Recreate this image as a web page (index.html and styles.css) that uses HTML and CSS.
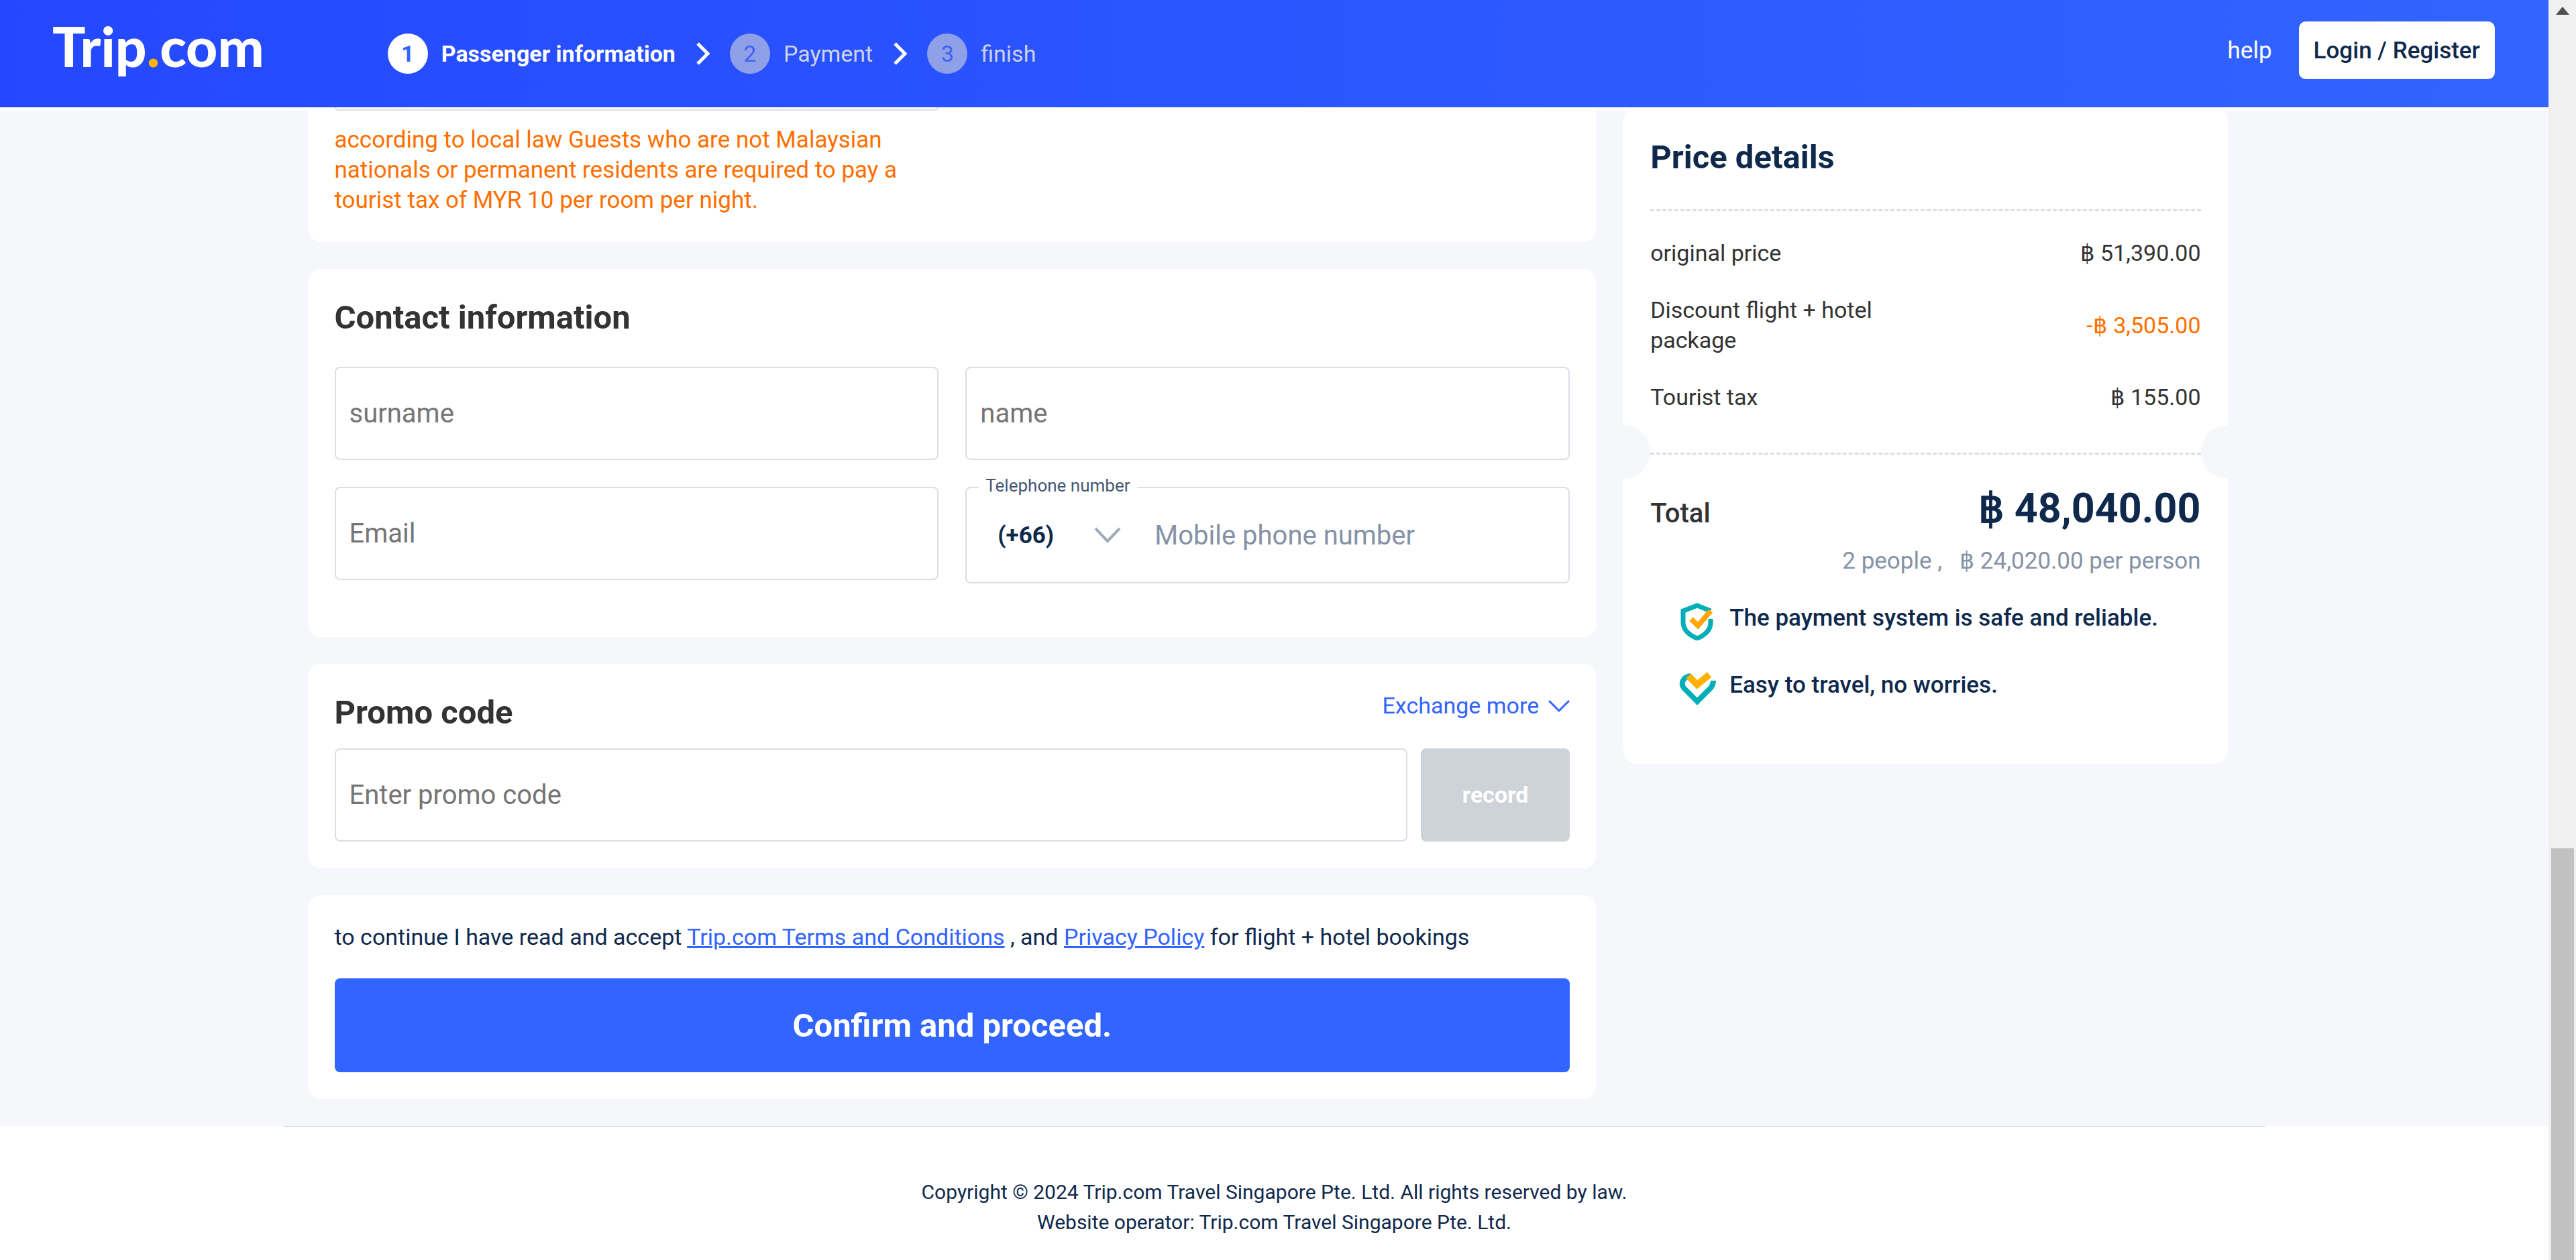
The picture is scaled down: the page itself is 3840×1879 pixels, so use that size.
FILE: index.html
```html
<!DOCTYPE html>
<html lang="en">
<head>
	<meta charset="UTF-8">
	<title>Trip.com - Passenger information</title>
	<link rel="stylesheet" href="styles.css">
</head>
<body>
	<div id="page">
		<header id="header">
			<a href="#" class="logo">Trip<span>.</span>com</a>
			<ol class="steps">
				<li class="on"><i>1</i>Passenger information</li>
				<li class="arrow"><svg width="21" height="36" viewBox="0 0 21 36"><path d="M3 3l15 15L3 33"/></svg></li>
				<li><i>2</i>Payment</li>
				<li class="arrow"><svg width="21" height="36" viewBox="0 0 21 36"><path d="M3 3l15 15L3 33"/></svg></li>
				<li><i>3</i>finish</li>
			</ol>
			<nav class="user">
				<a href="#" class="help">help</a>
				<button type="button" class="login">Login / Register</button>
			</nav>
		</header>

		<main id="main">
			<div class="wrap">
				<form class="left">
					<section class="card tax">
						<div class="field-end"></div>
						<p>according to local law Guests who are not Malaysian nationals or permanent residents are required to pay a tourist tax of MYR 10 per room per night.</p>
					</section>

					<section class="card contact">
						<h2>Contact information</h2>
						<div class="fields">
							<input type="text" class="field" placeholder="surname" aria-label="surname">
							<input type="text" class="field" placeholder="name" aria-label="name">
							<input type="email" class="field" placeholder="Email" aria-label="Email">
							<div class="phone">
								<label for="tel">Telephone number</label>
								<div class="code">
									<select aria-label="Country code"><option>(+66)</option></select>
									<svg width="40" height="24" viewBox="0 0 40 24"><path d="M2 2l18 19L38 2"/></svg>
								</div>
								<input type="tel" id="tel" placeholder="Mobile phone number">
							</div>
						</div>
					</section>

					<section class="card promo">
						<div class="promo-top">
							<h2>Promo code</h2>
							<a href="#">Exchange more <svg width="32" height="20" viewBox="0 0 32 20"><path d="M1 2l15 15L31 2"/></svg></a>
						</div>
						<div class="promo-row">
							<input type="text" class="field" placeholder="Enter promo code" aria-label="Promo code">
							<button type="button" class="record">record</button>
						</div>
					</section>

					<section class="card terms">
						<p>to continue I have read and accept <a href="#">Trip.com Terms and Conditions</a> , and <a href="#">Privacy Policy</a> for flight + hotel bookings</p>
						<button type="submit" class="confirm">Confirm and proceed.</button>
					</section>
				</form>

				<aside class="card price">
					<h2>Price details</h2>
					<dl class="list">
						<div><dt>original price</dt><dd>฿ 51,390.00</dd></div>
						<div><dt>Discount flight + hotel package</dt><dd class="off">-฿ 3,505.00</dd></div>
						<div><dt>Tourist tax</dt><dd>฿ 155.00</dd></div>
					</dl>
					<div class="cut"></div>
					<div class="total"><span>Total</span><strong>฿ 48,040.00</strong></div>
					<p class="each">2 people , &nbsp; ฿ 24,020.00 per person</p>
					<ul class="promise">
						<li>
							<svg width="56" height="56" viewBox="0 0 56 56">
								<path d="M48 12L28 4 7 12v17c0 12 9 19 21 24 12-5 20-12 20-24v-5" fill="none" stroke="#00aeb8" stroke-width="7"/>
								<path d="M19 24l10 10L48 12" fill="none" stroke="#ffa70a" stroke-width="8"/>
							</svg>
							The payment system is safe and reliable.
						</li>
						<li>
							<svg width="56" height="56" viewBox="0 0 56 56">
								<path d="M18 9C7 10 3 20 8 27l20 20 20-20q4-5 4-11" fill="none" stroke="#00aeb8" stroke-width="8"/>
								<path d="M15 9l13 13L46 7" fill="none" stroke="#ffb000" stroke-width="10"/>
							</svg>
							Easy to travel, no worries.
						</li>
					</ul>
				</aside>
			</div>
		</main>

		<footer id="footer">
			<div class="copy">
				<p>Copyright © 2024 Trip.com Travel Singapore Pte. Ltd. All rights reserved by law.</p>
				<p>Website operator: Trip.com Travel Singapore Pte. Ltd.</p>
			</div>
		</footer>
	</div>
	<div id="scroll">
		<svg width="20" height="12" viewBox="0 0 20 12"><path d="M10 0l10 12H0z"/></svg>
		<div class="thumb"></div>
	</div>
</body>
</html>
```
FILE: styles.css
```css
*{margin:0; padding:0; box-sizing:border-box;}
ol,ul{list-style:none;}
svg{display:block; flex:none;}
input,select,button{font:inherit; color:inherit; border:0; background:none; outline:none;}
button{cursor:pointer;}
a{color:#3264ff;}

body{display:flex; min-height:100vh; background:#fff; color:#0f294d; font:35px/45px Roboto,"Noto Sans",sans-serif;}
#page{flex:1; min-width:0;}

/* header */
#header{display:flex; align-items:center; height:160px; padding:0 80px 0 78px; background:linear-gradient(90deg,#2448ff,#3264ff); color:#fff;}
.logo{padding-bottom:24px; color:#fff; font:900 82px/90px Lato,sans-serif; text-decoration:none;}
.logo span{color:#ffb400;}
.steps{display:flex; align-items:center; margin-left:184px; font-size:34px;}
.steps li{display:flex; align-items:center; gap:20px; color:#cdd3e6;}
.steps i{width:60px; height:60px; border-radius:50%; background:#8f9fe8; color:#3d64f5; font-style:normal; line-height:60px; text-align:center;}
.steps .on{color:#fff; font-weight:bold;}
.steps .on i{background:#fff; color:#3264ff;}
.steps .arrow{margin:0 30px;}
.arrow path{fill:none; stroke:#fff; stroke-width:5;}
.user{display:flex; align-items:center; gap:40px; margin-left:auto; padding-bottom:10px;}
.help{color:#fff; text-decoration:none;}
.login{height:86px; padding:0 22px; border-radius:10px; background:#fff; color:#0f294d; font-weight:500;}

/* content */
#main{background:linear-gradient(#fff 5px,#f5f7fb 5px);}
.wrap{display:grid; grid-template-columns:1921fr 900fr; gap:40px; align-items:start; max-width:2954px; margin:0 auto; padding:0 56px 40px 36px;}
.left{display:flex; flex-direction:column; gap:40px;}
.card{padding:40px; border-radius:20px; background:#fff;}
.card h2{color:#333; font-size:49px; line-height:66px;}

.tax{padding-top:0; border-radius:0 0 20px 20px;}
.tax p{width:900px; margin-top:21px; color:#ff6f00;}
.field-end{width:900px; height:5px; border:2px solid #dadfe6; border-top:0; border-radius:0 0 8px 8px;}

.contact{padding-bottom:80px;}
.fields{display:grid; grid-template-columns:1fr 1fr; gap:40px; align-items:start; margin-top:40px;}
.field{width:100%; height:139px; padding:0 20px; border:2px solid #dadfe6; border-radius:8px; font-size:40px;}
.field::placeholder{color:#757575;}
.phone{position:relative; display:flex; align-items:center; height:144px; padding:0 20px 0 46px; border:2px solid #dadfe6; border-radius:8px;}
.phone label{position:absolute; top:-22px; left:18px; padding:0 10px; background:#fff; color:#455873; font-size:26px; line-height:36px;}
.code{display:flex; align-items:center; margin-right:50px;}
.code select{width:144px; appearance:none; font-weight:bold;}
.code path{fill:none; stroke:#a0acbc; stroke-width:4;}
.phone input{flex:1; min-width:0; font-size:40px;}
.phone input::placeholder{color:#8592a6;}

.promo-top{display:flex; justify-content:space-between; align-items:flex-start;}
.promo-top a{display:flex; align-items:center; gap:14px; font-size:34px; text-decoration:none;}
.promo-top path{fill:none; stroke:#3264ff; stroke-width:3;}
.promo-row{display:flex; gap:20px; margin-top:20px;}
.record{flex:none; width:222px; border-radius:8px; background:#ced2d9; color:#fff; font-size:34px; font-weight:bold;}

.terms p{font-size:34px;}
.confirm{display:block; width:100%; height:140px; margin-top:39px; border-radius:8px; background:#3264ff; color:#fff; font-size:49px; font-weight:bold;}

/* price */
.price h2{color:#0f294d; line-height:70px;}
.list{margin-top:42px; padding:40px 0 60px; border-top:3px dashed #dadfe6; display:flex; flex-direction:column; gap:40px; color:#333; font-size:34px;}
.list div{display:flex; justify-content:space-between; align-items:center;}
.list dt{max-width:400px;}
.list .off{color:#ff6f00;}
.cut{position:relative; border-top:3px dashed #dadfe6;}
.cut:before,.cut:after{content:""; position:absolute; top:-44px; width:80px; height:80px; border-radius:50%; background:#f5f7fb;}
.cut:before{left:-80px;}
.cut:after{right:-80px;}
.total{display:flex; justify-content:space-between; align-items:baseline; margin-top:40px; color:#333; font-size:40px; font-weight:500; line-height:80px;}
.total strong{color:#0f294d; font-size:61px; font-weight:bold;}
.each{margin-top:8px; color:#8592a6; text-align:right;}
.promise{margin:40px 0 0 42px;}
.promise li{display:flex; gap:20px; height:100px; font-weight:500;}

/* footer */
.copy{max-width:2954px; margin:0 auto; padding:74px 0 30px; border-top:2px solid #e2e4e8; font-size:30px; text-align:center;}

/* scroll bar */
#scroll{display:flex; flex-direction:column; justify-content:space-between; align-items:center; width:41px; padding-top:10px; background:#f0f0f0;}
#scroll svg{fill:#505050;}
.thumb{width:34px; height:614px; background:#c1c1c1;}
```
